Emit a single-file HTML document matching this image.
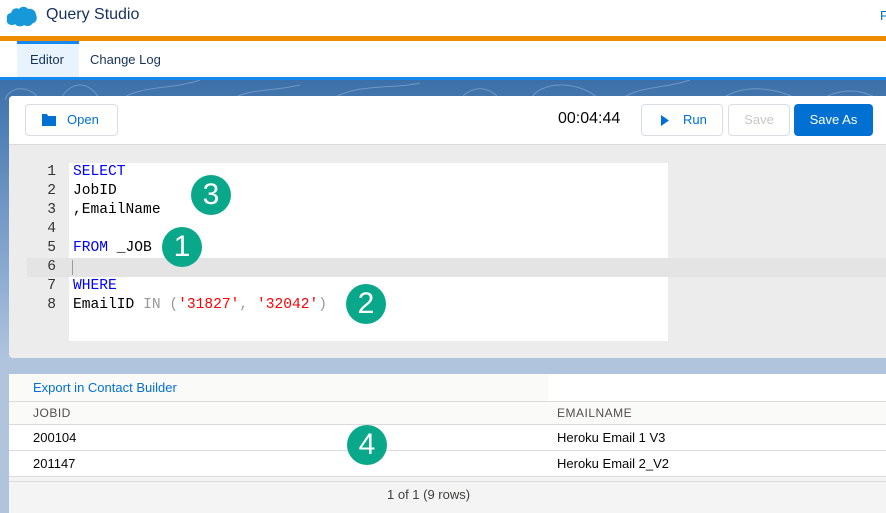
<!DOCTYPE html>
<html><head><style>
*{margin:0;padding:0;box-sizing:border-box}
body{width:886px;height:513px;overflow:hidden;font-family:"Liberation Sans",sans-serif;background:#b0c4de;position:relative}
.a{position:absolute}
.mono{font-family:"Liberation Mono",monospace;font-size:14.6px}
.circ{position:absolute;width:40px;height:40px;border-radius:50%;background:#0aa88a;color:#fff;font-size:30px;text-align:center;line-height:40px}
.btn{position:absolute;border:1px solid #d8dde6;border-radius:4px;background:#fff;font-size:13px;height:32px;line-height:30px;text-align:center}
</style></head><body>
<div class="a" style="left:0;top:0;width:886px;height:36px;background:#fff"></div>
<svg class="a" style="left:6px;top:5px" width="32" height="23" viewBox="0 0 32 23"><path d="M6 20C2 20 0 17 1 14C0 11 2 8 5 8C6 4 10 2 13 4C15 1 20 1 22 4C26 3 30 6 30 10C32 13 30 18 27 18C25 21 21 22 18 20C16 22 11 22 9 19C8 20 7 20 6 20Z" fill="#1798d8"/></svg>
<div class="a" style="left:46px;top:6px;font-size:16px;color:#16325c">Query Studio</div>
<div class="a" style="left:880px;top:8px;font-size:13px;color:#0070d2">F</div>
<div class="a" style="left:0;top:36px;width:886px;height:5px;background:#f08c00"></div>
<div class="a" style="left:0;top:41px;width:886px;height:36px;background:#fff"></div>
<div class="a" style="left:17px;top:41px;width:62px;height:36px;background:#e8f3fd;border-top:3px solid #1589ee"></div>
<div class="a" style="left:30px;top:52px;font-size:13px;color:#16325c">Editor</div>
<div class="a" style="left:90px;top:52px;font-size:13px;color:#16325c">Change Log</div>
<div class="a" style="left:0;top:77px;width:886px;height:3px;background:#1589ee"></div>
<div class="a" style="left:0;top:80px;width:886px;height:433px;background:linear-gradient(#3d70a8 0px,#4b7db3 40px,#8fadd2 200px,#b0c4de 280px)"></div>
<svg class="a" style="left:0;top:80px" width="886" height="20"><g fill="none" stroke="#8fb0d6" stroke-width="1" opacity=".6"><path d="M5 20C10 5 30 5 40 20M60 20C70 0 90 0 100 20M120 20C140 5 170 10 200 0M230 20C250 8 270 12 300 5M330 20C360 2 390 10 420 3M460 20C470 5 490 5 500 20M530 20C540 0 580 0 600 20M620 20C640 5 660 10 690 0M720 20C740 5 770 5 800 20M820 20C840 8 860 8 880 20"/></g></svg>
<div class="a" style="left:9px;top:96px;width:877px;height:262px;background:#ececec;border-radius:4px 0 0 4px"></div>
<div class="a" style="left:9px;top:96px;width:877px;height:49px;background:#fff;border-bottom:1px solid #dddbda;border-radius:4px 0 0 0"></div>
<div class="btn" style="left:25px;top:104px;width:93px"></div>
<svg class="a" style="left:42px;top:114px" width="14" height="12"><path d="M0 0H5L6 2H14V12H0Z" fill="#0070d2"/></svg>
<div class="a" style="left:67px;top:112px;font-size:13px;color:#0070d2">Open</div>
<div class="a" style="left:558px;top:110px;font-size:16px;color:#080707">00:04:44</div>
<div class="btn" style="left:641px;top:104px;width:82px"></div>
<svg class="a" style="left:661px;top:115px" width="8" height="11"><path d="M0 0L8 5.5L0 11Z" fill="#0070d2"/></svg>
<div class="a" style="left:683px;top:112px;font-size:13px;color:#0070d2">Run</div>
<div class="btn" style="left:728px;top:104px;width:62px;color:#c9c7c5">Save</div>
<div class="btn" style="left:794px;top:104px;width:79px;background:#0070d2;border-color:#0070d2;color:#fff">Save As</div>
<div class="a" style="left:69px;top:163px;width:599px;height:178px;background:#fff"></div>
<div class="a" style="left:27px;top:258px;width:859px;height:19px;background:#e4e4e4"></div>
<div class="a" style="left:72px;top:260px;width:1px;height:15px;background:#999"></div>
<div class="a mono" style="left:40px;top:163px;line-height:19px;color:#333;text-align:right;width:16px">1<br>2<br>3<br>4<br>5<br>6<br>7<br>8</div>
<div class="a mono" style="left:73px;top:163px;line-height:19px;color:#000;white-space:pre"><span style="color:#00f">SELECT</span>
JobID
,EmailName

<span style="color:#00f">FROM</span> _JOB

<span style="color:#00f">WHERE</span>
EmailID <span style="color:#999">IN (</span><span style="color:#f00">'31827'</span><span style="color:#999">,</span> <span style="color:#f00">'32042'</span><span style="color:#999">)</span></div>
<div class="circ" style="left:191px;top:175px">3</div>
<div class="circ" style="left:162px;top:227px">1</div>
<div class="circ" style="left:346px;top:284px">2</div>
<div class="a" style="left:9px;top:374px;width:877px;height:139px;background:#f4f4f4;border-radius:4px 0 0 0"></div>
<div class="a" style="left:9px;top:374px;width:540px;height:27px;background:#fafaf9"></div>
<div class="a" style="left:549px;top:374px;width:337px;height:27px;background:#fff"></div>
<div class="a" style="left:33px;top:380px;font-size:13px;color:#0070d2">Export in Contact Builder</div>
<div class="a" style="left:9px;top:401px;width:877px;height:24px;background:#fafaf9;border-top:1px solid #dddbda;border-bottom:1px solid #dddbda"></div>
<div class="a" style="left:33px;top:406px;font-size:12px;color:#514f4d;letter-spacing:.5px">JOBID</div>
<div class="a" style="left:557px;top:406px;font-size:12px;color:#514f4d;letter-spacing:.5px">EMAILNAME</div>
<div class="a" style="left:9px;top:425px;width:877px;height:52px;background:#fff"></div>
<div class="a" style="left:9px;top:450px;width:877px;height:1px;background:#dddbda"></div>
<div class="a" style="left:9px;top:476px;width:877px;height:1px;background:#dddbda"></div>
<div class="a" style="left:33px;top:430px;font-size:13px;color:#080707">200104</div>
<div class="a" style="left:33px;top:456px;font-size:13px;color:#080707">201147</div>
<div class="a" style="left:557px;top:430px;font-size:13px;color:#080707">Heroku Email 1 V3</div>
<div class="a" style="left:557px;top:456px;font-size:13px;color:#080707">Heroku Email 2_V2</div>
<div class="circ" style="left:347px;top:425px">4</div>
<div class="a" style="left:9px;top:481px;width:877px;height:1px;background:#dddbda"></div>
<div class="a" style="left:387px;top:487px;font-size:13px;color:#3e3e3c">1 of 1 (9 rows)</div>
</body></html>
